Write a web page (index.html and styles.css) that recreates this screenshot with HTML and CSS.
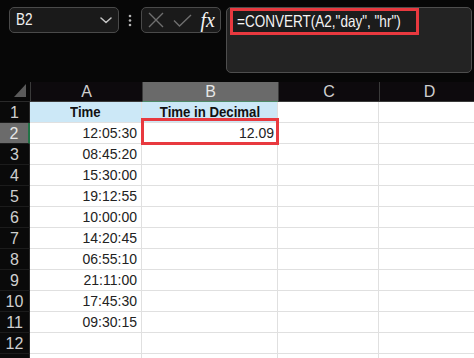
FILE: index.html
```html
<!DOCTYPE html>
<html>
<head>
<meta charset="utf-8">
<link rel="stylesheet" href="styles.css">
</head>
<body>
<div class="app">
  <div class="toolbar">
    <div class="namebox">
      <span class="ref">B2</span>
      <svg class="chev" width="12" height="7" viewBox="0 0 12 7"><path d="M1 1 L6 5.5 L11 1" fill="none" stroke="#c4c4c4" stroke-width="1.5" stroke-linecap="round" stroke-linejoin="round"/></svg>
    </div>
    <div class="dots">
      <svg width="4" height="13" viewBox="0 0 4 13"><circle cx="2" cy="2" r="1.3" fill="#b5b5b5"/><circle cx="2" cy="6.5" r="1.3" fill="#b5b5b5"/><circle cx="2" cy="11" r="1.3" fill="#b5b5b5"/></svg>
    </div>
    <div class="fxbox">
      <svg width="16" height="16" viewBox="0 0 16 16"><path d="M1 1 L15 15 M15 1 L1 15" stroke="#6f6f6f" stroke-width="1.4" fill="none"/></svg>
      <svg width="19" height="13" viewBox="0 0 19 13"><path d="M1 6.5 L6.5 12 L18 1" stroke="#6f6f6f" stroke-width="1.4" fill="none"/></svg>
      <span class="fx">fx</span>
    </div>
    <div class="formula">
      <div class="formula-box"><span class="formula-text">=CONVERT(A2,"day", "hr")</span></div>
    </div>
  </div>
  <div class="sheet">
    <div class="corner"><svg width="14" height="15" viewBox="0 0 14 15"><path d="M13 1 L13 14 L1 14 Z" fill="#5a5a5a"/></svg></div>
    <div class="colhead">A</div>
    <div class="colhead sel">B</div>
    <div class="colhead">C</div>
    <div class="colhead">D</div>

    <div class="rowhead">1</div>
    <div class="cell title"><span class="title-text">Time</span></div>
    <div class="cell title"><span class="title-text">Time in Decimal</span></div>
    <div class="cell"></div>
    <div class="cell"></div>

    <div class="rowhead sel">2</div>
    <div class="cell num">12:05:30</div>
    <div class="cell num active">12.09</div>
    <div class="cell"></div>
    <div class="cell"></div>

    <div class="rowhead">3</div>
    <div class="cell num">08:45:20</div>
    <div class="cell"></div>
    <div class="cell"></div>
    <div class="cell"></div>

    <div class="rowhead">4</div>
    <div class="cell num">15:30:00</div>
    <div class="cell"></div>
    <div class="cell"></div>
    <div class="cell"></div>

    <div class="rowhead">5</div>
    <div class="cell num">19:12:55</div>
    <div class="cell"></div>
    <div class="cell"></div>
    <div class="cell"></div>

    <div class="rowhead">6</div>
    <div class="cell num">10:00:00</div>
    <div class="cell"></div>
    <div class="cell"></div>
    <div class="cell"></div>

    <div class="rowhead">7</div>
    <div class="cell num">14:20:45</div>
    <div class="cell"></div>
    <div class="cell"></div>
    <div class="cell"></div>

    <div class="rowhead">8</div>
    <div class="cell num">06:55:10</div>
    <div class="cell"></div>
    <div class="cell"></div>
    <div class="cell"></div>

    <div class="rowhead">9</div>
    <div class="cell num">21:11:00</div>
    <div class="cell"></div>
    <div class="cell"></div>
    <div class="cell"></div>

    <div class="rowhead">10</div>
    <div class="cell num">17:45:30</div>
    <div class="cell"></div>
    <div class="cell"></div>
    <div class="cell"></div>

    <div class="rowhead">11</div>
    <div class="cell num">09:30:15</div>
    <div class="cell"></div>
    <div class="cell"></div>
    <div class="cell"></div>

    <div class="rowhead">12</div>
    <div class="cell"></div>
    <div class="cell"></div>
    <div class="cell"></div>
    <div class="cell"></div>

    <div class="rowhead"></div>
    <div class="cell"></div>
    <div class="cell"></div>
    <div class="cell"></div>
    <div class="cell"></div>
  </div>
</div>
</body>
</html>
```

FILE: styles.css
```css
html, body {
  margin: 0;
  padding: 0;
  background: #ffffff;
}
body {
  width: 474px;
  height: 358px;
  overflow: hidden;
  font-family: "Liberation Sans", Arial, sans-serif;
}
.app {
  width: 474px;
  height: 358px;
  overflow: hidden;
}
.toolbar {
  height: 82px;
  box-sizing: border-box;
  background: #070707;
  display: flex;
  align-items: flex-start;
  padding: 7px 0 0 9px;
}
.namebox {
  width: 110px;
  height: 26px;
  box-sizing: border-box;
  border: 1px solid #4a4a4a;
  border-radius: 5px;
  background: #1a1a1a;
  display: flex;
  align-items: center;
  justify-content: space-between;
  padding: 0 6px 0 6px;
}
.ref {
  display: inline-block;
  color: #f0f0f0;
  font-size: 17px;
  line-height: 20px;
  transform: scaleX(0.8);
  transform-origin: left center;
}
.dots {
  width: 22px;
  height: 26px;
  display: flex;
  align-items: center;
  justify-content: center;
}
.fxbox {
  width: 80px;
  height: 26px;
  box-sizing: border-box;
  border: 1px solid #4a4a4a;
  border-radius: 5px;
  background: #1a1a1a;
  display: flex;
  align-items: center;
  justify-content: space-between;
  padding: 0 5px 0 6px;
}
.fx {
  color: #f2f2f2;
  font-family: "Liberation Serif", "DejaVu Serif", serif;
  font-style: italic;
  font-size: 20px;
  line-height: 18px;
}
.formula {
  margin-left: 5px;
  margin-right: 2px;
  flex: 1;
  height: 66px;
  box-sizing: border-box;
  border: 1px solid #4e4e4e;
  border-radius: 5px;
  background: #232323;
  padding: 0 0 0 3px;
}
.formula-box {
  width: 189px;
  height: 27px;
  box-sizing: border-box;
  border: 3px solid #e8393f;
  padding: 0 0 0 4px;
  background: #1c1c1c;
  white-space: nowrap;
  overflow: hidden;
}
.formula-text {
  display: inline-block;
  color: #f4f4f4;
  font-size: 16.5px;
  line-height: 20px;
  transform: scaleX(0.82);
  transform-origin: left center;
}
.sheet {
  display: grid;
  grid-template-columns: 30px 112px 136px 101px 100px;
  grid-template-rows: 20px repeat(13, 21px);
}
.corner {
  background: #070707;
  box-sizing: border-box;
  border-bottom: 1px solid #2a2a2a;
  display: flex;
  align-items: flex-end;
  justify-content: flex-end;
  padding: 0 3px 3px 0;
}
.colhead {
  background: #0d0a0d;
  color: #cfcfcf;
  font-size: 16px;
  line-height: 19px;
  text-align: center;
  box-sizing: border-box;
  border-left: 1px solid #3a3a3a;
  border-bottom: 1px solid #3a3a3a;
}
.colhead.sel {
  background: #6a6a6a;
  color: #e6e6e6;
  border-bottom: 1px solid #4f8a68;
}
.rowhead {
  background: #0a0a0a;
  color: #cfcfcf;
  font-size: 16px;
  line-height: 21px;
  text-align: center;
  box-sizing: border-box;
  border-bottom: 1px solid #1c1c1c;
  border-right: 1px solid #2a2a2a;
}
.rowhead.sel {
  background: #6b6b6b;
  color: #e6e6e6;
  border-right: 2px solid #217346;
}
.cell {
  box-sizing: border-box;
  border-right: 1px solid #e0e0e0;
  border-bottom: 1px solid #e0e0e0;
  color: #222222;
  font-size: 14px;
  line-height: 21px;
  white-space: nowrap;
}
.cell.title {
  background: #cce8f7;
  text-align: center;
  color: #111111;
}
.title-text {
  display: inline-block;
  font-weight: bold;
  font-size: 15px;
  line-height: 20px;
  transform: scaleX(0.88);
  transform-origin: center center;
}
.cell.num {
  text-align: right;
  padding-right: 4px;
}
.cell.active {
  position: relative;
  padding-right: 3px;
}
.cell.active::after {
  content: "";
  position: absolute;
  top: -5px;
  bottom: -2px;
  left: -1px;
  right: -2px;
  border: 3px solid #e8393f;
}
```
